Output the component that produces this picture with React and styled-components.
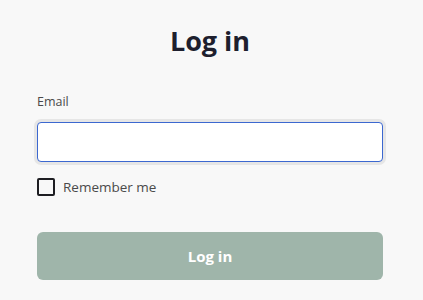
import styled, { createGlobalStyle } from 'styled-components';

const GlobalStyle = createGlobalStyle`
  html, body {
    margin: 0;
    background: #f8f8f8;
  }
  body {
    font-family: "Open Sans", "Noto Sans", sans-serif;
  }
`;

const Page = styled.div`
  display: flex;
  flex-direction: column;
  padding: 22px 40px 0 37px;
`;

const Title = styled.h1`
  margin: 0 0 34px;
  color: #1e1f2e;
  font-size: 27px;
  font-weight: 700;
  line-height: 38px;
  text-align: center;
`;

const Label = styled.label`
  margin-bottom: 12px;
  color: #4a4a4a;
  font-size: 12.5px;
  line-height: 16px;
`;

const Input = styled.input`
  box-sizing: border-box;
  width: 100%;
  height: 40px;
  padding: 0 10px;
  border: 1px solid #3c68d0;
  border-radius: 4px;
  margin: 0;
  background: #fff;
  box-shadow: 0 0 0 3px #e6e6e6;
  font-family: inherit;
  font-size: 14px;
  outline: none;
`;

const CheckRow = styled.label`
  display: flex;
  align-items: center;
  gap: 8px;
  margin-top: 16px;
  color: #4a4a4a;
  font-size: 13.5px;
  line-height: 18px;
`;

const Box = styled.span`
  box-sizing: border-box;
  width: 18px;
  height: 18px;
  border: 2px solid #1e1e22;
  border-radius: 2px;
`;

const Submit = styled.button`
  height: 48px;
  margin-top: 36px;
  border: none;
  background: #9fb5aa;
  border-radius: 6px;
  color: #fff;
  font-family: inherit;
  font-size: 15px;
  font-weight: 700;
`;

export default function App() {
  return (
    <>
      <GlobalStyle />
      <Page>
        <Title>Log in</Title>
        <Label>Email</Label>
        <Input type="email" />
        <CheckRow>
          <Box />
          Remember me
        </CheckRow>
        <Submit>Log in</Submit>
      </Page>
    </>
  );
}
